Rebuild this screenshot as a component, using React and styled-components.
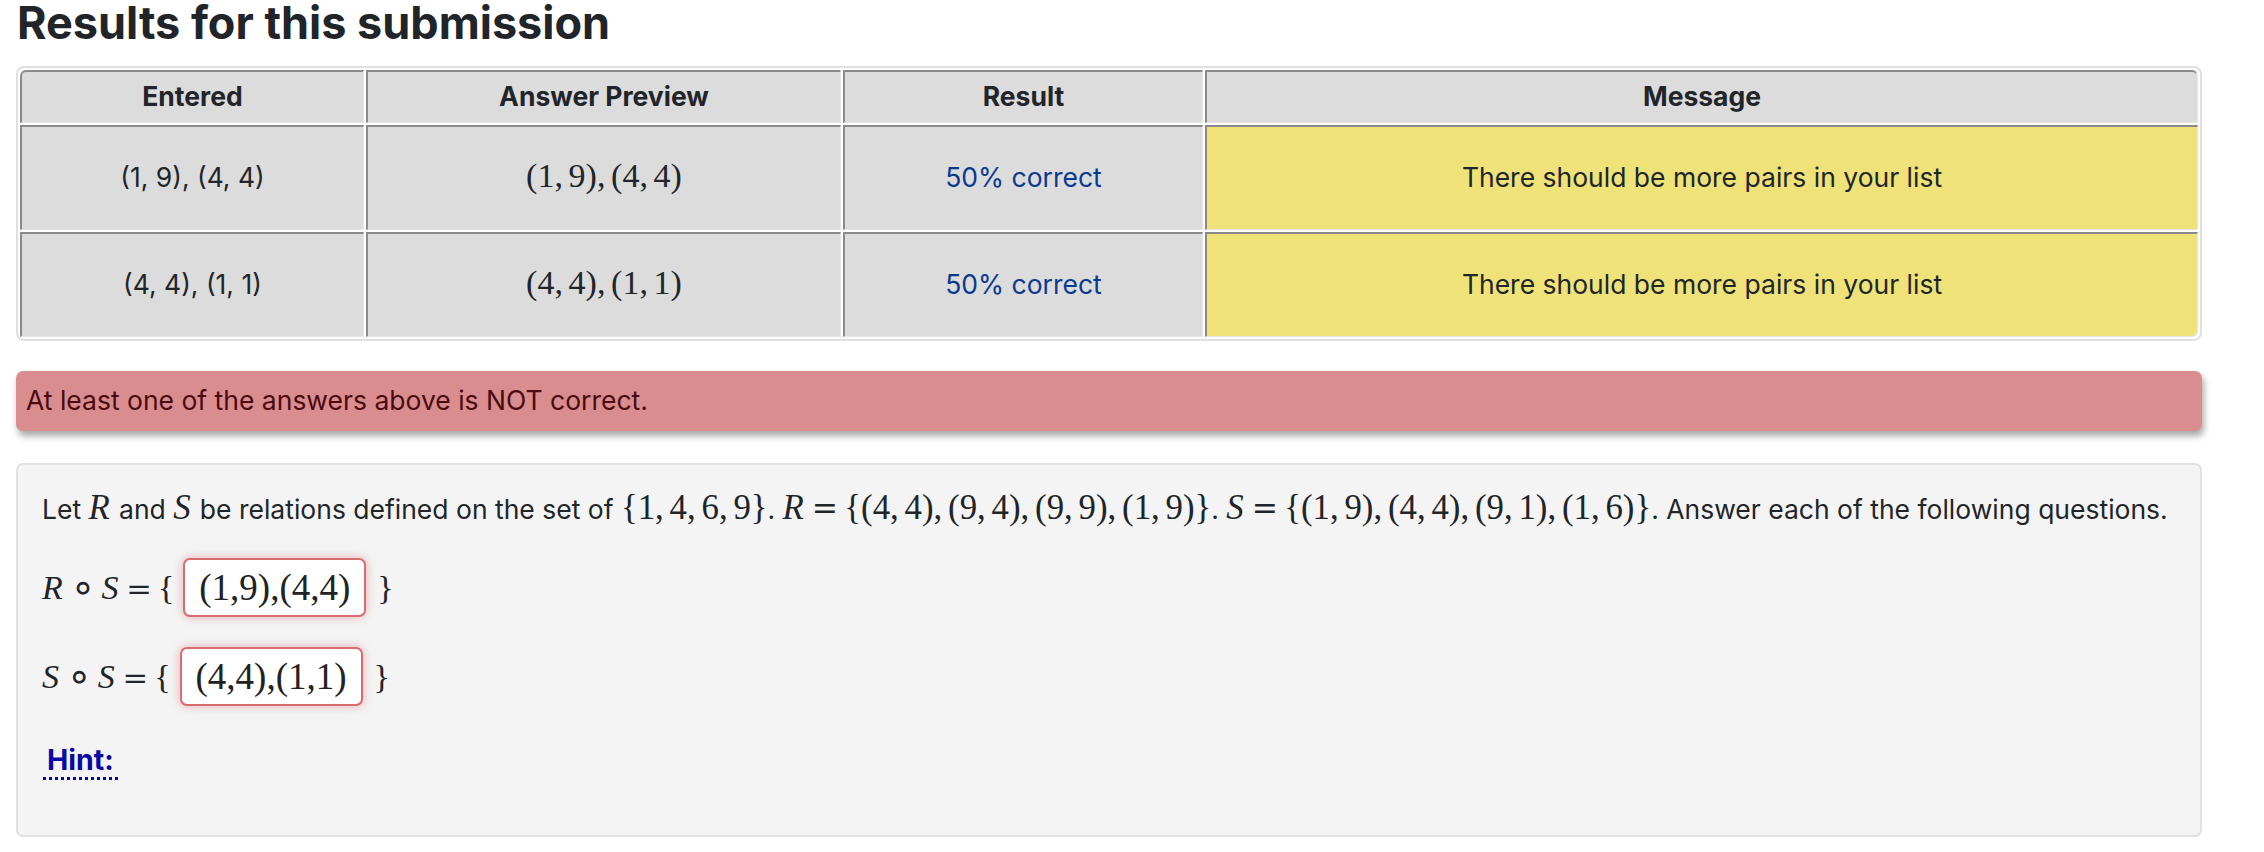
import React from 'react'
import styled, { createGlobalStyle } from 'styled-components'

const GlobalStyle = createGlobalStyle`
    body {
        margin: 0;
        background: #fff;
        color: #212529;
        font-family: "Inter", "Liberation Sans", sans-serif;
        font-size: 26.5px;
        line-height: 1.5;
    }
`

const Page = styled.div`
    width: 2186px;
    margin-left: 16px;
`

const Title = styled.h2`
    margin: 0 0 0 1px;
    font-size: 45px;
    font-weight: 700;
    line-height: 46px;
    color: #212529;
`

const ResultsCard = styled.div`
    margin-top: 20px;
    border: 2px solid #e0e0e0;
    border-radius: 8px;
    padding: 1px;
`

const ResultsTable = styled.table`
    table-layout: fixed;
    border-collapse: separate;
    border-spacing: 2px;
    margin: -1px;
    width: calc(100% + 2px);
`

const Cell = styled.td`
    box-sizing: border-box;
    background: ${p => (p.$variant === 'message' ? '#eee278' : '#dcdcdc')};
    border-top: 2px solid #8a8a8a;
    border-left: 2px solid #8a8a8a;
    border-right: 1px solid #e6e6e6;
    border-bottom: 1px solid #e6e6e6;
    text-align: center;
    vertical-align: middle;
    height: ${p => (p.$head ? '53px' : '105px')};
    padding: 0 12px;
    font-weight: ${p => (p.$head ? 700 : 400)};
    color: ${p => (p.$variant === 'result' ? '#0a3a90' : '#212529')};
    &:first-child { border-top-left-radius: ${p => (p.$corner === 'top' ? '6px' : '0')}; }
    &:last-child {
        border-top-right-radius: ${p => (p.$corner === 'top' ? '6px' : '0')};
        border-bottom-right-radius: ${p => (p.$corner === 'bottom' ? '6px' : '0')};
    }
`

const Alert = styled.div`
    margin-top: 30px;
    height: 60px;
    box-sizing: border-box;
    display: flex;
    align-items: center;
    padding: 0 10px;
    background: #d98d8f;
    color: #4b0a10;
    border-radius: 7px;
    box-shadow: 2px 5px 7px rgba(0, 0, 0, 0.35);
`

const ProblemCard = styled.div`
    margin-top: 32px;
    height: 374px;
    box-sizing: border-box;
    background: #f4f4f4;
    border: 2px solid #e1e1e1;
    border-radius: 7px;
    padding: 25px 24px 0 24px;
    display: flex;
    flex-direction: column;
    align-items: flex-start;
`

const Statement = styled.p`
    margin: 0;
    line-height: 38px;
    white-space: nowrap;
`

const Math = styled.span`
    font-family: "Liberation Serif", "DejaVu Serif", serif;
    font-size: ${p => p.$size || '34px'};
    line-height: 1;
`

const V = styled.i`
    font-style: italic;
    margin-right: 0.05em;
`

// wide "=" like the TeX one
const Eq = styled.span`
    display: inline-block;
    margin: 0 0.2em;
    font-family: "DejaVu Serif", serif;
    font-size: 0.9em;
    line-height: 1;
`

const Ring = styled.span`
    display: inline-block;
    margin: 0 0.14em;
    font-family: "DejaVu Sans", sans-serif;
    font-size: 1.2em;
    line-height: 1;
    vertical-align: -0.04em;
`

const Comma = styled.span`
    margin-right: 0.1667em;
`

const AnswerRow = styled.div`
    display: flex;
    align-items: center;
    margin-top: 30px;
    height: 59px;
`

const AnswerBox = styled.div`
    box-sizing: border-box;
    height: 59px;
    flex: none;
    display: flex;
    align-items: center;
    padding: 0 14px;
    margin: 0 11px 0 9px;
    background: #fff;
    border: 2px solid #d86c6f;
    border-radius: 7px;
    box-shadow: 0 0 8px 1px rgba(214, 80, 84, 0.35);
    font-family: "Liberation Serif", "DejaVu Serif", serif;
    font-size: 37px;
    color: #222;
`

const Hint = styled.span`
    margin-top: 38px;
    margin-left: 1px;
    padding: 0 4px;
    font-size: 28.5px;
    font-weight: 700;
    color: #0808a8;
    line-height: 1.15;
    border-bottom: 3px dotted #0808a8;
`

const pair = (a, b) => (
    <>({a},<Comma />{b})</>
)

const list = pairs => pairs.map((p, i) => (
    <React.Fragment key={i}>
        {pair(p[0], p[1])}
        {i < pairs.length - 1 && <>,<Comma /></>}
    </React.Fragment>
))

const rows = [
    { entered: '(1, 9), (4, 4)', preview: [[1, 9], [4, 4]] },
    { entered: '(4, 4), (1, 1)', preview: [[4, 4], [1, 1]] },
]

const MS = '34.8px'

const App = () => {
    return (
        <Page>
            <GlobalStyle />
            <Title>Results for this submission</Title>
            <ResultsCard>
                <ResultsTable>
                    <colgroup>
                        <col style={{ width: 344 }} />
                        <col style={{ width: 475 }} />
                        <col style={{ width: 360 }} />
                        <col />
                    </colgroup>
                    <thead>
                        <tr>
                            <Cell as="th" $head $corner="top">Entered</Cell>
                            <Cell as="th" $head>Answer Preview</Cell>
                            <Cell as="th" $head>Result</Cell>
                            <Cell as="th" $head $corner="top">Message</Cell>
                        </tr>
                    </thead>
                    <tbody>
                        {rows.map((r, i) => (
                            <tr key={i}>
                                <Cell>{r.entered}</Cell>
                                <Cell><Math>{list(r.preview)}</Math></Cell>
                                <Cell $variant="result">50% correct</Cell>
                                <Cell $variant="message" $corner={i === rows.length - 1 ? 'bottom' : ''}>
                                    There should be more pairs in your list
                                </Cell>
                            </tr>
                        ))}
                    </tbody>
                </ResultsTable>
            </ResultsCard>

            <Alert>At least one of the answers above is NOT correct.</Alert>

            <ProblemCard>
                <Statement>
                    Let <Math $size={MS}><V>R</V></Math> and <Math $size={MS}><V>S</V></Math> be relations defined on the set of{' '}
                    <Math $size={MS}>{'{'}1,<Comma />4,<Comma />6,<Comma />9{'}'}</Math>.{' '}
                    <Math $size={MS}><V>R</V><Eq>=</Eq>{'{'}{list([[4, 4], [9, 4], [9, 9], [1, 9]])}{'}'}</Math>.{' '}
                    <Math $size={MS}><V>S</V><Eq>=</Eq>{'{'}{list([[1, 9], [4, 4], [9, 1], [1, 6]])}{'}'}</Math>.
                    {' '}Answer each of the following questions.
                </Statement>

                <AnswerRow>
                    <Math><V>R</V><Ring>∘</Ring><V>S</V><Eq>=</Eq>{'{'}</Math>
                    <AnswerBox>(1,9),(4,4)</AnswerBox>
                    <Math>{'}'}</Math>
                </AnswerRow>

                <AnswerRow>
                    <Math><V>S</V><Ring>∘</Ring><V>S</V><Eq>=</Eq>{'{'}</Math>
                    <AnswerBox>(4,4),(1,1)</AnswerBox>
                    <Math>{'}'}</Math>
                </AnswerRow>

                <Hint>Hint:</Hint>
            </ProblemCard>
        </Page>
    )
}

export default App
